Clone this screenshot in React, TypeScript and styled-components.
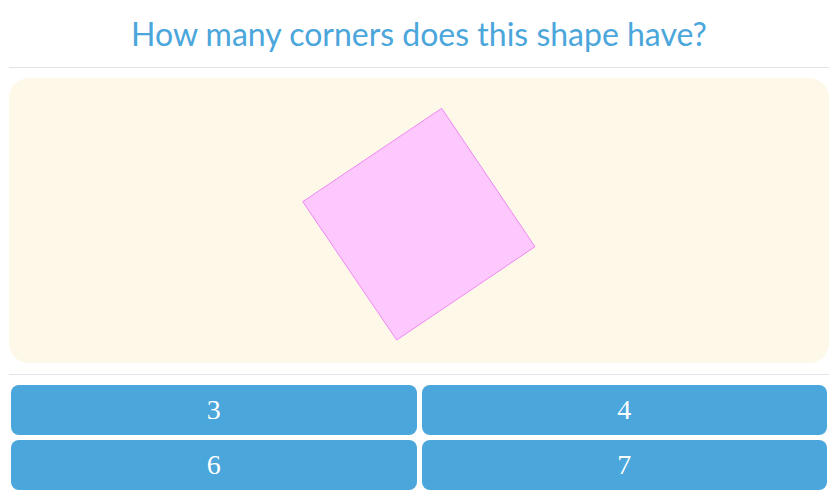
import styled, { createGlobalStyle } from 'styled-components'

const GlobalStyle = createGlobalStyle`
  html, body {
    margin: 0;
    padding: 0;
    background: #ffffff;
  }
`

const Page = styled.div`
  width: 820px;
  padding: 0 11px 0 9px;
  font-family: Lato, 'Open Sans', sans-serif;
`

const Title = styled.h1`
  margin: 0;
  height: 67px;
  display: flex;
  align-items: center;
  justify-content: center;
  font-size: 32px;
  font-weight: 400;
  color: #4aa6db;
  border-bottom: 1px solid #e2e2ea;
`

const Stage = styled.div`
  margin-top: 10px;
  height: 285px;
  border-radius: 20px;
  background-color: #fef8e8;
  overflow: hidden;
  svg {
    display: block;
  }
`

const Divider = styled.hr`
  margin: 11px 0 0;
  border: none;
  border-top: 1px solid #e2e2ea;
`

const Answers = styled.div`
  display: grid;
  grid-template-columns: 1fr 1fr;
  gap: 5px 5px;
  padding: 10px 2px 0;
`

const Answer = styled.button`
  height: 50px;
  border: none;
  border-radius: 8px;
  background-color: #4aa6db;
  color: #ffffff;
  font-family: 'Liberation Serif', 'Times New Roman', serif;
  font-size: 28px;
  cursor: pointer;
  padding: 0;
`

const answers = [3, 4, 6, 7]

function App() {
  return (
    <>
      <GlobalStyle />
      <Page>
        <Title>How many corners does this shape have?</Title>
        <Stage>
          <svg width="820" height="285" viewBox="0 0 820 285">
            <polygon
              points="432.7,30.3 526,168.7 387.7,262 293.7,123.7"
              fill="#fdc8fe"
              stroke="#ee88f4"
              strokeWidth="1"
            />
          </svg>
        </Stage>
        <Divider />
        <Answers>
          {answers.map((n) => (
            <Answer key={n}>{n}</Answer>
          ))}
        </Answers>
      </Page>
    </>
  )
}

export default App
